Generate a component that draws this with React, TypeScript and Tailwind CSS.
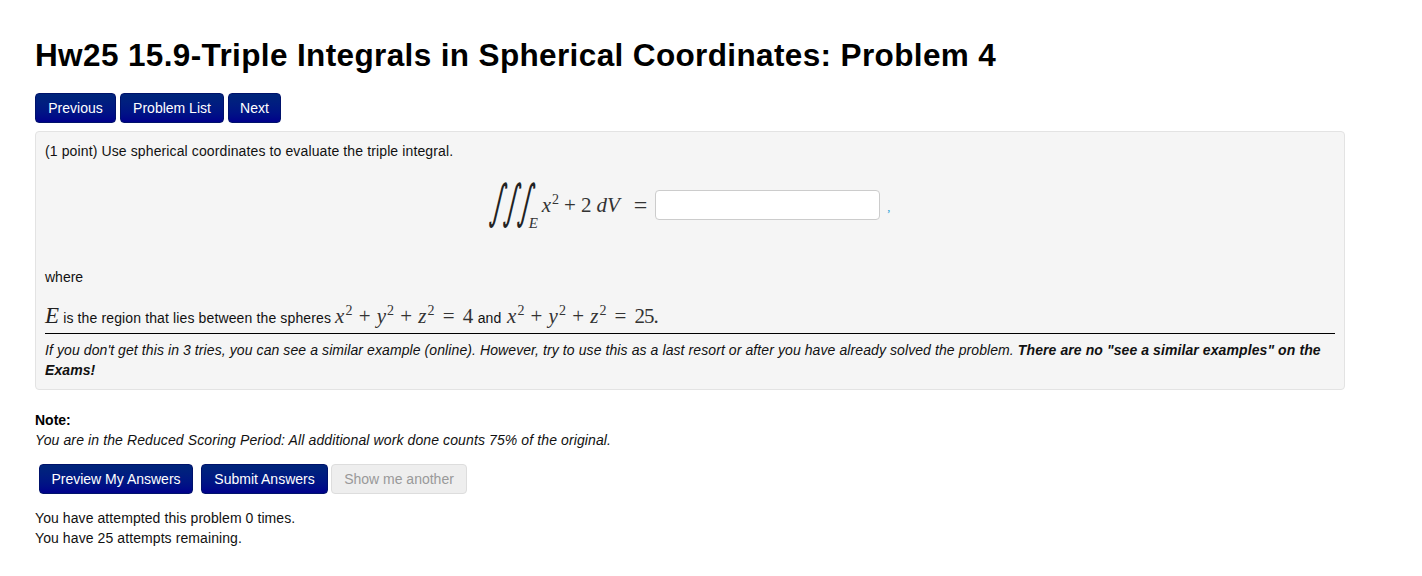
const sans = { fontFamily: '"Liberation Sans", Arial, sans-serif' };

const navBtn =
  "h-[30px] rounded-[4px] border border-[#00126b] bg-gradient-to-b from-[#00257a] to-[#00008b] text-white text-[14px] leading-[20px] flex items-center justify-center";

function V({ children }: { children: React.ReactNode }) {
  return <i className="italic">{children}</i>;
}

function Sq() {
  return <sup className="text-[14px] leading-none ml-[1px] top-[-8px] not-italic">2</sup>;
}

function Sphere({ r }: { r: string }) {
  return (
    <span className="font-['Liberation_Serif',serif] text-[21px] text-[#333]">
      <V>x</V>
      <Sq />
      <span className="mx-[6px]">+</span>
      <V>y</V>
      <Sq />
      <span className="mx-[6px]">+</span>
      <V>z</V>
      <Sq />
      <span className="mx-[8px]">=</span>
      <span className="tracking-[-1px]">{r}</span>
    </span>
  );
}

export default function App() {
  return (
    <div
      className="w-[1422px] h-[576px] bg-white px-[35px] pt-[35px] text-[14px] leading-[20px] text-[#111] overflow-hidden"
      style={sans}
    >
      <h1 className="text-[31.5px] leading-[40px] font-bold text-black tracking-[0.37px]">
        Hw25 15.9-Triple Integrals in Spherical Coordinates: Problem 4
      </h1>

      <div className="mt-[18px] flex gap-[4px]">
        <button className={`${navBtn} w-[81px]`}>Previous</button>
        <button className={`${navBtn} w-[104px]`}>Problem List</button>
        <button className={`${navBtn} w-[53px]`}>Next</button>
      </div>

      <div className="mt-[8px] w-[1310px] h-[259px] rounded-[4px] border border-[#e3e3e3] bg-[#f5f5f5] px-[9px] pt-[9px]">
        <p className="tracking-[0.12px]">(1 point) Use spherical coordinates to evaluate the triple integral.</p>

        <div className="mt-[9px] h-[70px] flex items-center justify-center font-['Liberation_Serif',serif] text-[21px] text-[#333]">
          <span className="flex items-center w-[51px] h-[60px] relative">
            <span className="flex -mt-[9px] gap-[1px] -ml-[1px] text-[40px] leading-[60px] scale-y-[1.18] -skew-x-[14deg] text-[#222] font-['DejaVu_Sans',sans-serif] [&>span]:w-[13px] [&>span]:scale-x-[0.65]">
              <span>∫</span>
              <span>∫</span>
              <span>∫</span>
            </span>
            <i className="absolute left-[38px] top-[40px] text-[15px] leading-[16px]">E</i>
          </span>
          <span>
            <V>x</V>
            <Sq />
            <span className="mx-[5px]">+</span>2<span className="ml-[5px]"><V>dV</V></span>
          </span>
          <span className="ml-[14px] text-[24px]">=</span>
          <input
            type="text"
            className="ml-[8px] w-[225px] h-[30px] rounded-[4px] border border-[#ccc] bg-white"
          />
          <span className="ml-[7px] text-[#1a9ad6] text-[12px] w-[2px] mt-[4px]">,</span>
        </div>

        <p className="mt-[27px]">where</p>

        <p className="mt-[19px] h-[24px] flex items-baseline whitespace-pre tracking-[0.13px]">
          <i className="font-['Liberation_Serif',serif] text-[23px] text-[#222] mr-[4px]">E</i>
          <span>is the region that lies between the spheres </span>
          <Sphere r="4" />
          <span className="mx-[1.5px]"> and </span>
          <Sphere r="25." />
        </p>

        <hr className="mt-[3px] border-0 border-t border-black" />

        <p className="mt-[6px] italic tracking-[0.09px]">
          If you don't get this in 3 tries, you can see a similar example (online). However, try to
          use this as a last resort or after you have already solved the problem.{" "}
          <b className="font-bold">There are no "see a similar examples" on the Exams!</b>
        </p>
      </div>

      <p className="mt-[20px] font-bold text-black">Note:</p>
      <p className="italic tracking-[0.11px]">
        You are in the Reduced Scoring Period: All additional work done counts 75% of the original.
      </p>

      <div className="mt-[14px] ml-[4px] flex">
        <button className={`${navBtn} w-[154px]`}>Preview My Answers</button>
        <button className={`${navBtn} w-[127px] ml-[8px]`}>Submit Answers</button>
        <button className="h-[30px] w-[136px] ml-[3px] rounded-[4px] border border-[#ddd] bg-[#eee] text-[#999] text-[14px]">
          Show me another
        </button>
      </div>

      <p className="mt-[14px] tracking-[0.08px]">You have attempted this problem 0 times.</p>
      <p className="tracking-[0.09px]">You have 25 attempts remaining.</p>
    </div>
  );
}
